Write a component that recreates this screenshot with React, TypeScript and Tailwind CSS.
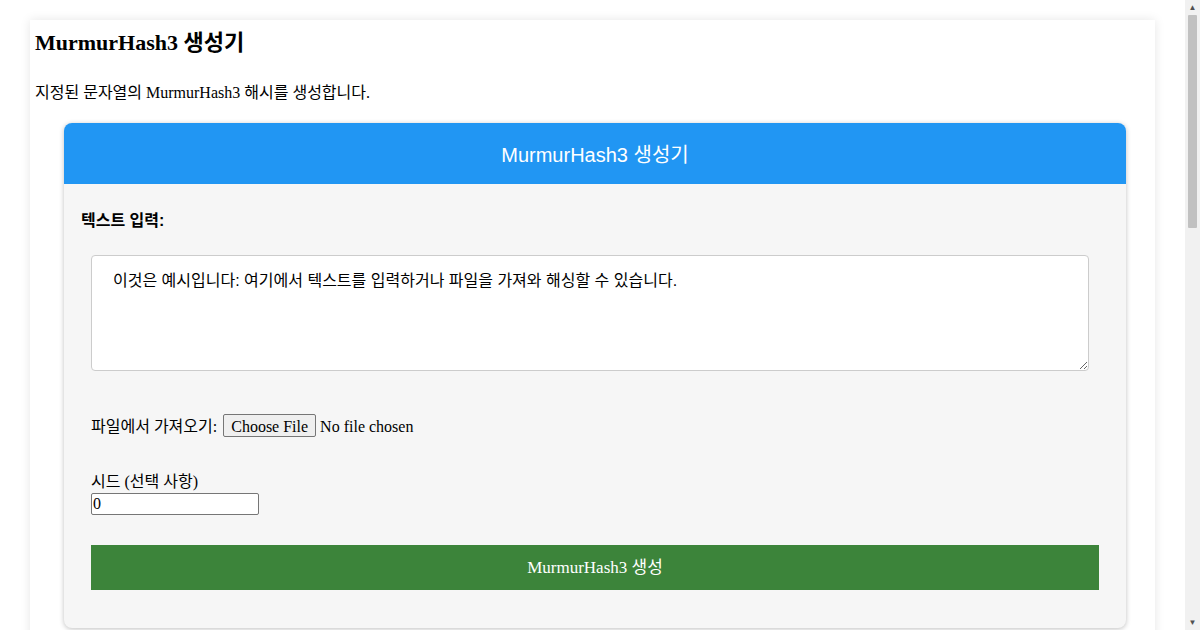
const serif = "font-['Liberation_Serif','Noto_Sans_CJK_KR',serif]";
const sans = "font-['Liberation_Sans','Noto_Sans_CJK_KR',sans-serif]";

export default function App() {
  return (
    <div className={`flex bg-white text-black ${serif}`}>
      <div className="min-h-[1750px] w-[1185px] shrink-0 pt-5">
        <div className="mx-auto w-[1125px] bg-white p-[5px] pb-[1100px] shadow-[0_0_10px_rgba(0,0,0,0.1)]">
          <h1 className="mt-[3px] text-[22px] leading-[30px] font-bold">MurmurHash3 생성기</h1>
          <p className="mt-[23px] text-base leading-[23px]">
            지정된 문자열의 MurmurHash3 해시를 생성합니다.
          </p>

          {/* 카드: 파란 머리글 + 회색 본문 */}
          <div className="mt-[19px] ml-[29px] w-[1062px] overflow-hidden rounded-lg bg-[#f6f6f6] shadow-[0_1px_5px_rgba(0,0,0,0.25)]">
            <div className={`flex h-[61px] items-center justify-center bg-[#2196f3] pt-[2px] text-[20px] text-white ${sans}`}>
              MurmurHash3 생성기
            </div>

            <div className="px-[17px] pt-[25px] pb-[38px]">
              <label className={`block text-base leading-[23px] font-bold ${sans}`}>텍스트 입력:</label>

              <textarea
                className={`mt-[23px] ml-[10px] block h-[116px] w-[998px] rounded border border-[#ccc] bg-white pt-[13px] pl-[21px] text-base leading-[23px] ${sans}`}
                defaultValue="이것은 예시입니다: 여기에서 텍스트를 입력하거나 파일을 가져와 해싱할 수 있습니다."
              />

              <div className="mt-[44px] ml-[10px] flex h-[23px] items-center text-base">
                <span>파일에서 가져오기:</span>
                <input
                  type="file"
                  className="ml-[6px] text-base file:mr-[4px] file:h-[23px] file:rounded-[2px] file:border file:border-[#767676] file:bg-[#efefef] file:px-[7px] file:text-black"
                />
              </div>

              <label className="mt-[33px] ml-[10px] block text-base leading-[22px]">시드 (선택 사항)</label>
              <input
                type="text"
                defaultValue="0"
                className="ml-[10px] block h-[22px] w-[168px] rounded-[2px] border border-[#767676] bg-white px-px text-base leading-[20px]"
              />

              <button className="mt-[30px] ml-[10px] block h-[45px] w-[1008px] bg-[#3c843a] text-[17px] text-white">
                MurmurHash3 생성
              </button>
            </div>
          </div>
        </div>
      </div>

      {/* 브라우저 세로 스크롤바 */}
      <div className="sticky top-0 flex h-[630px] w-[15px] shrink-0 flex-col items-center bg-[#f1f1f1] text-[8px] leading-none text-[#505050]">
        <span className="flex h-[15px] items-center">▲</span>
        <div className="h-[213px] w-[9px] rounded-[1px] bg-[#c1c1c1]" />
        <span className="mt-auto flex h-[15px] items-center">▼</span>
      </div>
    </div>
  );
}
